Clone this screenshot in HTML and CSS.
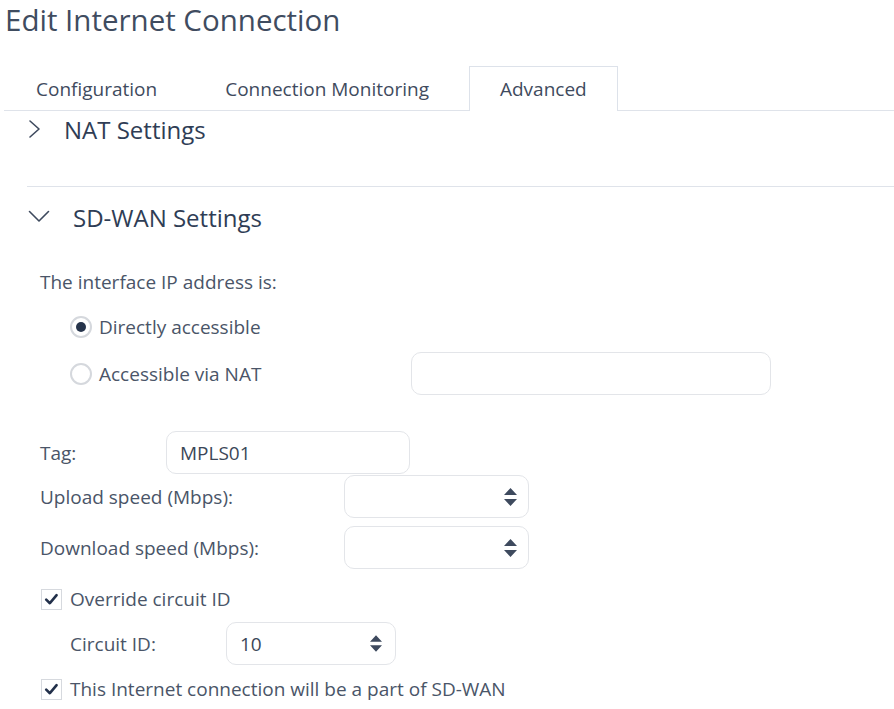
FILE: index.html
```html
<!DOCTYPE html>
<html lang="en">
<head>
<meta charset="utf-8">
<title>Edit Internet Connection</title>
<link rel="stylesheet" href="styles.css">
</head>
<body>
<h1 class="title">Edit Internet Connection</h1>

<div class="tabs">
  <div class="tab">Configuration</div>
  <div class="tab">Connection Monitoring</div>
  <div class="tab tab--active">Advanced</div>
</div>

<div class="section section--collapsed">
  <div class="section-header">
    <svg class="chev chev--right" width="13" height="20" viewBox="0 0 13 20"><path d="M2 2 L11 10 L2 18" fill="none" stroke="#3e4a5e" stroke-width="1.6" stroke-linecap="round" stroke-linejoin="round"/></svg>
    <span class="section-title">NAT Settings</span>
  </div>
</div>

<div class="section">
  <div class="section-header section-header--open">
    <svg class="chev chev--down" width="22" height="13" viewBox="0 0 22 13"><path d="M1.5 1.5 L11 11 L20.5 1.5" fill="none" stroke="#3e4a5e" stroke-width="1.6" stroke-linecap="round" stroke-linejoin="round"/></svg>
    <span class="section-title">SD-WAN Settings</span>
  </div>

  <div class="section-body">
    <div class="text-row">The interface IP address is:</div>

    <div class="row row--radio1">
      <label class="option">
        <span class="radio radio--checked"></span>
        <span>Directly accessible</span>
      </label>
    </div>

    <div class="row row--radio2">
      <label class="option option--wide">
        <span class="radio"></span>
        <span>Accessible via NAT</span>
      </label>
      <div class="input input--nat"></div>
    </div>

    <div class="row row--tag">
      <span class="label label--tag">Tag:</span>
      <div class="input input--tag">MPLS01</div>
    </div>

    <div class="row row--upload">
      <span class="label label--speed">Upload speed (Mbps):</span>
      <div class="input input--speed">
        <span class="value"></span>
        <svg class="spin" width="13" height="18" viewBox="0 0 13 18"><path d="M0 7 L6.5 0 L13 7 Z M0 11 L13 11 L6.5 18 Z" fill="#3e4a5e"/></svg>
      </div>
    </div>

    <div class="row row--download">
      <span class="label label--speed">Download speed (Mbps):</span>
      <div class="input input--speed">
        <span class="value"></span>
        <svg class="spin" width="13" height="18" viewBox="0 0 13 18"><path d="M0 7 L6.5 0 L13 7 Z M0 11 L13 11 L6.5 18 Z" fill="#3e4a5e"/></svg>
      </div>
    </div>

    <div class="check-row check-row--override">
      <span class="checkbox"><svg width="19" height="19" viewBox="0 0 19 19"><path d="M4.2 9.6 L7.9 13.2 L14.6 5.2" fill="none" stroke="#22304a" stroke-width="2.6" stroke-linecap="round" stroke-linejoin="round"/></svg></span>
      <span>Override circuit ID</span>
    </div>

    <div class="row row--circuit">
      <span class="label label--circuit">Circuit ID:</span>
      <div class="input input--circuit">
        <span class="value">10</span>
        <svg class="spin spin--small" width="12" height="17" viewBox="0 0 13 18"><path d="M0 7 L6.5 0 L13 7 Z M0 11 L13 11 L6.5 18 Z" fill="#3e4a5e"/></svg>
      </div>
    </div>

    <div class="check-row check-row--sdwan">
      <span class="checkbox"><svg width="19" height="19" viewBox="0 0 19 19"><path d="M4.2 9.6 L7.9 13.2 L14.6 5.2" fill="none" stroke="#22304a" stroke-width="2.6" stroke-linecap="round" stroke-linejoin="round"/></svg></span>
      <span>This Internet connection will be a part of SD-WAN</span>
    </div>
  </div>
</div>
</body>
</html>
```

FILE: styles.css
```css
html, body {
  margin: 0;
  padding: 0;
  background: #ffffff;
  overflow: hidden;
}

body {
  font-family: "Open Sans", "Noto Sans", "Liberation Sans", sans-serif;
  font-size: 19px;
  color: #4a5568;
}

.title {
  margin: 0;
  padding-left: 5px;
  font-size: 29.5px;
  font-weight: 400;
  line-height: 40px;
  color: #3f4c60;
}

/* Tabs */
.tabs {
  margin: 26px 0 0 4px;
  height: 44px;
  display: flex;
  align-items: flex-end;
  gap: 4px;
  border-bottom: 1px solid #dfe3ea;
}

.tab {
  box-sizing: border-box;
  height: 44px;
  padding: 0 31px;
  border: 1px solid transparent;
  border-bottom: none;
  display: flex;
  align-items: center;
  font-size: 19px;
  color: #3f4b5e;
  white-space: nowrap;
}

.tab--active {
  height: 45px;
  margin-left: 4px;
  padding: 0 30px;
  margin-bottom: -1px;
  border-color: #dde2ea;
  background: #ffffff;
}

/* Sections */
.section {
  margin-left: 27px;
}

.section--collapsed {
  padding-bottom: 39px;
  border-bottom: 1px solid #dfe3ea;
}

.section-header {
  height: 36px;
  display: flex;
  align-items: center;
}

.section-header--open {
  margin-top: 12px;
}

.section-title {
  font-size: 24px;
  color: #2f3d55;
  white-space: nowrap;
}

.chev {
  flex: none;
  margin-left: 1px;
  margin-right: 23px;
}

.chev--right {
  margin-top: -1px;
}

.chev--down {
  margin-top: -2px;
}

.section-body {
  padding-left: 13px;
  display: flex;
  flex-direction: column;
}

.text-row {
  margin-top: 34px;
  height: 26px;
  line-height: 26px;
}

.row {
  height: 43px;
  display: flex;
  align-items: center;
  white-space: nowrap;
}

.row--radio1 { margin-top: 10px; }
.row--radio2 { margin-top: 4px; }
.row--tag { margin-top: 36px; }
.row--upload { margin-top: 1px; }
.row--download { margin-top: 8px; }
.row--circuit { margin-top: 8px; padding-left: 30px; }

/* Radio options */
.option {
  display: flex;
  align-items: center;
  gap: 7px;
  padding-left: 30px;
}

.option--wide {
  width: 371px;
  box-sizing: border-box;
}

.radio {
  box-sizing: border-box;
  width: 22px;
  height: 22px;
  border-radius: 50%;
  border: 2px solid #d5d8dd;
  display: flex;
  align-items: center;
  justify-content: center;
  flex: none;
}

.radio--checked::after {
  content: "";
  width: 10px;
  height: 10px;
  border-radius: 50%;
  background: #26344b;
}

/* Labels & inputs */
.label--tag { width: 126px; }
.label--speed { width: 304px; }
.label--circuit { width: 156px; }

.input {
  box-sizing: border-box;
  height: 43px;
  border: 1px solid #e3e5e9;
  border-radius: 10px;
  background: #ffffff;
  display: flex;
  align-items: center;
  padding: 0 11px 0 13px;
  color: #3b4758;
}

.input--nat { width: 360px; }
.input--tag { width: 244px; }
.input--speed { width: 185px; }
.input--circuit { width: 170px; padding-right: 13px; }

.value {
  flex: 1;
}

.spin {
  flex: none;
}

/* Checkboxes */
.check-row {
  height: 30px;
  display: flex;
  align-items: center;
  gap: 8px;
  white-space: nowrap;
}

.check-row--override { margin-top: 15px; }
.check-row--sdwan { margin-top: 9px; }

.checkbox {
  box-sizing: border-box;
  width: 21px;
  height: 21px;
  margin-left: 1px;
  border: 1px solid #d6d9de;
  flex: none;
  display: flex;
  align-items: center;
  justify-content: center;
}
```
